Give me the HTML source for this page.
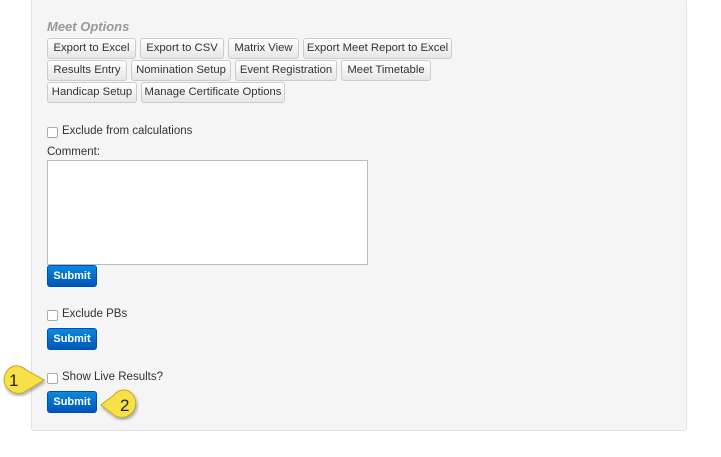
<!DOCTYPE html>
<html><head><style>
body{margin:0;width:721px;height:457px;background:#fff;font-family:"Liberation Sans",sans-serif;font-size:12px;color:#333;position:relative;overflow:hidden}
.panel{position:absolute;left:31px;top:-1px;width:654px;height:430px;background:#f5f5f5;border:1px solid #e3e3e3;border-radius:3px}
.t{position:absolute;left:47px;top:19px;font-weight:bold;font-style:italic;color:#999;font-size:13px}
.b{position:absolute;line-height:19px;border:1px solid #ccc;border-radius:3px;background:linear-gradient(#fff,#e6e6e6);text-align:center;font-size:11.3px;color:#333;box-sizing:border-box;height:21px;white-space:nowrap;overflow:hidden}
.s{position:absolute;left:47px;width:50px;height:22px;line-height:20px;background:linear-gradient(#0a88e0,#0056b8);border:1px solid #0050a8;border-radius:3px;color:#fff;font-weight:bold;text-align:center;font-size:11px;box-sizing:border-box}
.cb{position:absolute;left:47px;width:9px;height:9px;border:1px solid #aaa;border-radius:2px;background:#fff}
.l{position:absolute;left:62px;font-size:11.5px;white-space:nowrap}
.ta{position:absolute;left:47px;top:160px;width:321px;height:105px;border:1px solid #bbb;background:#fff;box-sizing:border-box}
</style></head><body>
<div class="panel"></div>
<div class="t">Meet Options</div>
<div class="b" style="left:47px;top:38px;width:89px">Export to Excel</div>
<div class="b" style="left:140px;top:38px;width:84px">Export to CSV</div>
<div class="b" style="left:228px;top:38px;width:71px">Matrix View</div>
<div class="b" style="left:303px;top:38px;width:149px">Export Meet Report to Excel</div>
<div class="b" style="left:47px;top:60px;width:80px">Results Entry</div>
<div class="b" style="left:131px;top:60px;width:100px">Nomination Setup</div>
<div class="b" style="left:235px;top:60px;width:102px">Event Registration</div>
<div class="b" style="left:341px;top:60px;width:90px">Meet Timetable</div>
<div class="b" style="left:47px;top:82px;width:90px">Handicap Setup</div>
<div class="b" style="left:141px;top:82px;width:144px">Manage Certificate Options</div>
<div class="cb" style="top:127px"></div><div class="l" style="top:125px">Exclude from calculations</div>
<div class="l" style="left:47px;top:146px">Comment:</div>
<div class="ta"></div>
<div class="s" style="top:265px">Submit</div>
<div class="cb" style="top:310px"></div><div class="l" style="top:308px">Exclude PBs</div>
<div class="s" style="top:328px">Submit</div>
<div class="cb" style="top:373px"></div><div class="l" style="top:371px">Show Live Results?</div>
<div class="s" style="top:391px">Submit</div>
<svg style="position:absolute;left:0;top:0" width="721" height="457">
<defs><filter id="sh"><feDropShadow dx="1" dy="2" stdDeviation="1.5" flood-opacity="0.35"/></filter></defs>
<path d="M14 366 A14 14 0 1 0 26 391 L44 380 L26 370 A14 14 0 0 0 14 366Z" fill="#f8e04a" stroke="#c8a820" filter="url(#sh)"/>
<text x="9" y="386" font-family="Liberation Sans" font-size="17" fill="#222">1</text>
<path d="M126 390 A14 14 0 1 1 114 415 L101 405 L114 395 A14 14 0 0 1 126 390Z" fill="#f8e04a" stroke="#c8a820" filter="url(#sh)"/>
<text x="120" y="411" font-family="Liberation Sans" font-size="17" fill="#222">2</text>
</svg>
</body></html>
